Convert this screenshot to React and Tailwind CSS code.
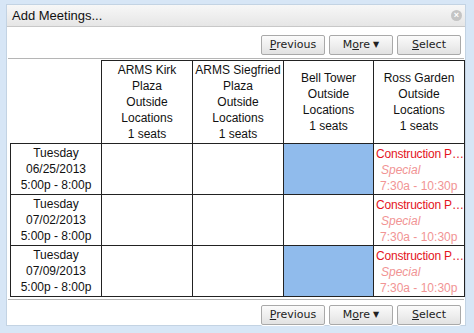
import React from 'react';

const columns = [
  ['ARMS Kirk', 'Plaza', 'Outside', 'Locations', '1 seats'],
  ['ARMS Siegfried', 'Plaza', 'Outside', 'Locations', '1 seats'],
  ['Bell Tower', 'Outside', 'Locations', '1 seats'],
  ['Ross Garden', 'Outside', 'Locations', '1 seats'],
];

const rows = [
  { day: 'Tuesday', date: '06/25/2013', time: '5:00p - 8:00p', blue: true },
  { day: 'Tuesday', date: '07/02/2013', time: '5:00p - 8:00p', blue: false },
  { day: 'Tuesday', date: '07/09/2013', time: '5:00p - 8:00p', blue: true },
];

function Btn({ first, rest, arrow }) {
  return (
    <button className="w-[64px] h-[20px] border border-[#a9a9a9] rounded-[2px] bg-gradient-to-b from-[#fbfbfb] to-[#e2e2e2] text-[11px] text-[#222] font-['DejaVu_Sans',sans-serif] flex items-center justify-center gap-[3px] shadow-[0_1px_0_#fff]">
      <span>
        {first}
        {rest}
      </span>
      {arrow && <span className="text-[8px]">▼</span>}
    </button>
  );
}

function Toolbar() {
  return (
    <div className="flex justify-end gap-[4px] pr-[2px]">
      <Btn first={<span className="underline">P</span>} rest="revious" />
      <Btn first="M" rest={<><span className="underline">o</span>re</>} arrow />
      <Btn first={<span className="underline">S</span>} rest="elect" />
    </div>
  );
}

function App() {
  return (
    <div className="w-[474px] h-[333px] bg-[#d7e6f6] pl-[6px] pr-[8px] pt-[4px] pb-[7px] font-['Liberation_Sans',Arial,sans-serif]">
      <div className="h-full bg-white flex flex-col border border-[#c3d3e3]">
        <div className="h-[23px] flex items-center justify-between pl-[5px] pr-[3px] bg-gradient-to-b from-[#f7f7f7] to-[#e6e6e6] border-b border-[#c8c8c8]">
          <span className="text-[13px] text-[#111]">Add Meetings...</span>
          <span className="w-[11px] h-[11px] rounded-full bg-[#c4c4c4] text-white text-[9px] leading-[11px] text-center font-bold">×</span>
        </div>
        <div className="pt-[8px] px-[2px]">
          <Toolbar />
        </div>
        <div className="mt-[3px] mx-[1px] border-t border-[#b5b5b5]"></div>
        <div className="pl-[3px] pt-[1px]">
          <table className="border-collapse table-fixed text-[12px] leading-[16px] text-[#111] text-center">
            <thead>
              <tr>
                <th className="w-[91px] p-0 border-0"></th>
                {columns.map((c, i) => (
                  <th
                    key={i}
                    className={`${i === 2 ? 'w-[90px]' : 'w-[91px]'} h-[83px] p-0 font-normal border border-[#222] align-middle`}
                  >
                    {c.map((l, j) => (
                      <div key={j}>{l}</div>
                    ))}
                  </th>
                ))}
              </tr>
            </thead>
            <tbody>
              {rows.map((r, i) => (
                <tr key={i}>
                  <td className="h-[51px] p-0 border border-[#222]">
                    <div>{r.day}</div>
                    <div>{r.date}</div>
                    <div>{r.time}</div>
                  </td>
                  <td className="p-0 border border-[#222]"></td>
                  <td className="p-0 border border-[#222]"></td>
                  <td className={`p-0 border border-[#222] ${r.blue ? 'bg-[#90bbec]' : ''}`}></td>
                  <td className="p-0 pl-[2px] border border-[#222] text-left align-top pt-[2px]">
                    <div className="text-[#e4141d] whitespace-nowrap tracking-[-0.2px]">Construction P…</div>
                    <div className="text-[#f19494] italic pl-[5px]">Special</div>
                    <div className="text-[#f19494] pl-[4px]">7:30a - 10:30p</div>
                  </td>
                </tr>
              ))}
            </tbody>
          </table>
        </div>
        <div className="mt-[2px] mx-[1px] border-t border-[#b5b5b5]"></div>
        <div className="pt-[5px] px-[2px]">
          <Toolbar />
        </div>
      </div>
    </div>
  );
}

export default App;
